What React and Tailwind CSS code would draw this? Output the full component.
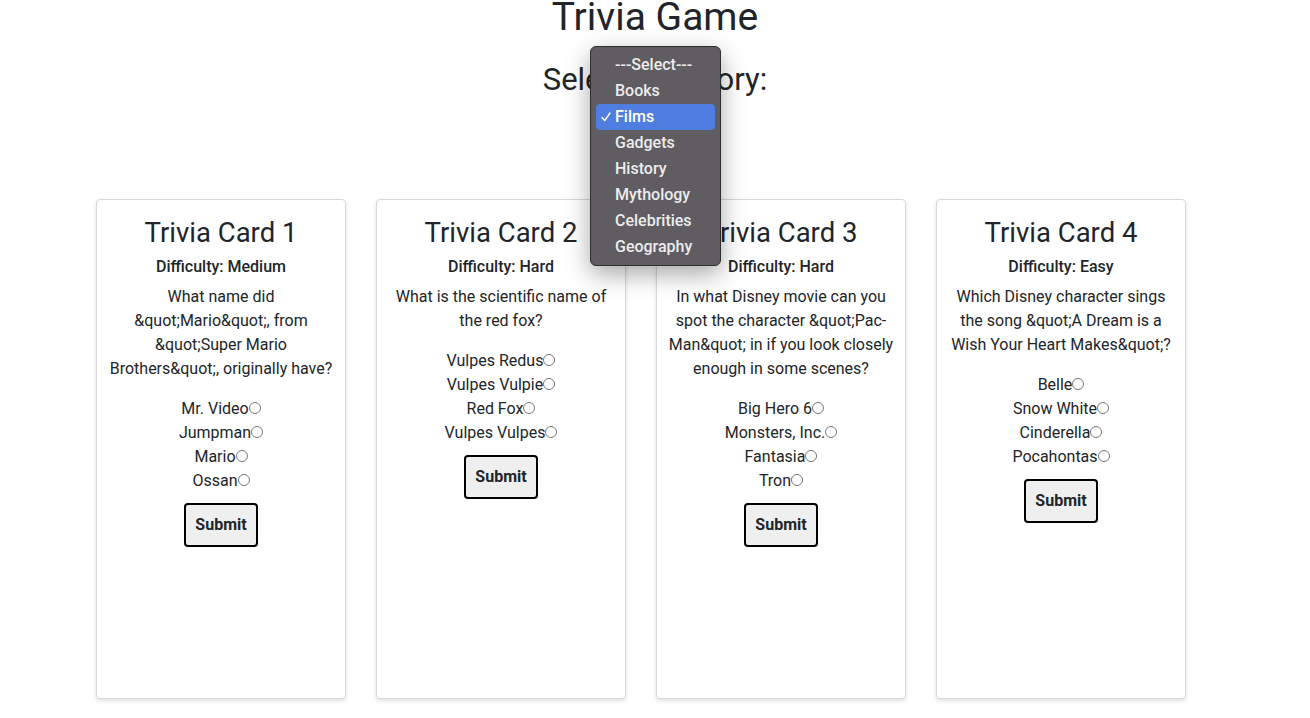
import React, { useState } from 'react';

const font = { fontFamily: 'Roboto, "Noto Sans", sans-serif' };

const categories = ['---Select---', 'Books', 'Films', 'Gadgets', 'History', 'Mythology', 'Celebrities', 'Geography'];

const cards = [
    {
        title: 'Trivia Card 1',
        difficulty: 'Medium',
        question: 'What name did &quot;Mario&quot;, from &quot;Super Mario Brothers&quot;, originally have?',
        answers: ['Mr. Video', 'Jumpman', 'Mario', 'Ossan'],
    },
    {
        title: 'Trivia Card 2',
        difficulty: 'Hard',
        question: 'What is the scientific name of the red fox?',
        answers: ['Vulpes Redus', 'Vulpes Vulpie', 'Red Fox', 'Vulpes Vulpes'],
    },
    {
        title: 'Trivia Card 3',
        difficulty: 'Hard',
        question: 'In what Disney movie can you spot the character &quot;Pac-Man&quot; in if you look closely enough in some scenes?',
        answers: ['Big Hero 6', 'Monsters, Inc.', 'Fantasia', 'Tron'],
    },
    {
        title: 'Trivia Card 4',
        difficulty: 'Easy',
        question: 'Which Disney character sings the song &quot;A Dream is a Wish Your Heart Makes&quot;?',
        answers: ['Belle', 'Snow White', 'Cinderella', 'Pocahontas'],
    },
];

function TriviaCard({ card, index }) {
    const [picked, setPicked] = useState(null);

    return (
        <div className="w-[250px] h-[500px] shrink-0 bg-white border border-[#d9d9d9] rounded-[4px] shadow-[0_2px_4px_rgba(0,0,0,0.12)] px-[7px] pt-4 flex flex-col items-center text-center">
            <h3 className="text-[27.5px] leading-[34px] mb-[5px]">{card.title}</h3>
            <p className="text-base leading-6 font-medium mb-[6px]">Difficulty: {card.difficulty}</p>
            <p className="text-base leading-6 mb-4">{card.question}</p>
            <div className="flex flex-col items-center">
                {card.answers.map((answer) => (
                    <label key={answer} className="text-base leading-6 flex items-center">
                        {answer}
                        <input
                            type="radio"
                            name={`card-${index}`}
                            checked={picked === answer}
                            onChange={() => setPicked(answer)}
                            className="appearance-none w-[12px] h-[12px] rounded-full border border-[#777] bg-white m-0 -mt-[2px] checked:border-[4px] checked:border-blue-600"
                        />
                    </label>
                ))}
            </div>
            <button className="mt-[10px] px-[9px] py-2 border-2 border-black rounded-[4px] bg-[#efefef] text-base leading-6 font-bold">
                Submit
            </button>
        </div>
    );
}

function CategoryMenu({ selected }) {
    return (
        <div className="absolute left-[590px] top-[46px] w-[131px] py-[5px] rounded-[6px] bg-[#5f5c62] border border-[#2e2e2e] shadow-[0_8px_24px_rgba(0,0,0,0.35)] z-10">
            {categories.map((cat) => (
                <div
                    key={cat}
                    className={`relative mx-[5px] h-[26px] rounded-[4px] pl-[19px] flex items-center text-base font-medium text-[#ececec] ${cat === selected ? 'bg-[#4f7ee0] text-white' : ''}`}
                >
                    {cat === selected && (
                        <svg className="absolute left-[5px] top-[8px]" width="10" height="10" viewBox="0 0 10 10" fill="none">
                            <path d="M1 5.5 L3.8 8.5 L9 1" stroke="white" strokeWidth="1.4" strokeLinecap="round" strokeLinejoin="round" />
                        </svg>
                    )}
                    {cat}
                </div>
            ))}
        </div>
    );
}

export default function App() {
    return (
        <div className="relative min-h-screen bg-white text-[#212529] overflow-hidden" style={font}>
            <div className="flex flex-col items-center">
                <h1 className="text-[39px] leading-[48px] -mt-[7px]">Trivia Game</h1>
                <h2 className="text-[31px] leading-[34px] mt-[22px]">Select Category:</h2>
                <select className="mt-3 h-[22px] text-sm border border-gray-400 rounded" defaultValue="Films">
                    {categories.map((cat) => (
                        <option key={cat}>{cat}</option>
                    ))}
                </select>
            </div>

            <div className="flex gap-[30px] pl-[96px] mt-[68px]">
                {cards.map((card, i) => (
                    <TriviaCard key={card.title} card={card} index={i} />
                ))}
            </div>

            <CategoryMenu selected="Films" />
        </div>
    );
}
